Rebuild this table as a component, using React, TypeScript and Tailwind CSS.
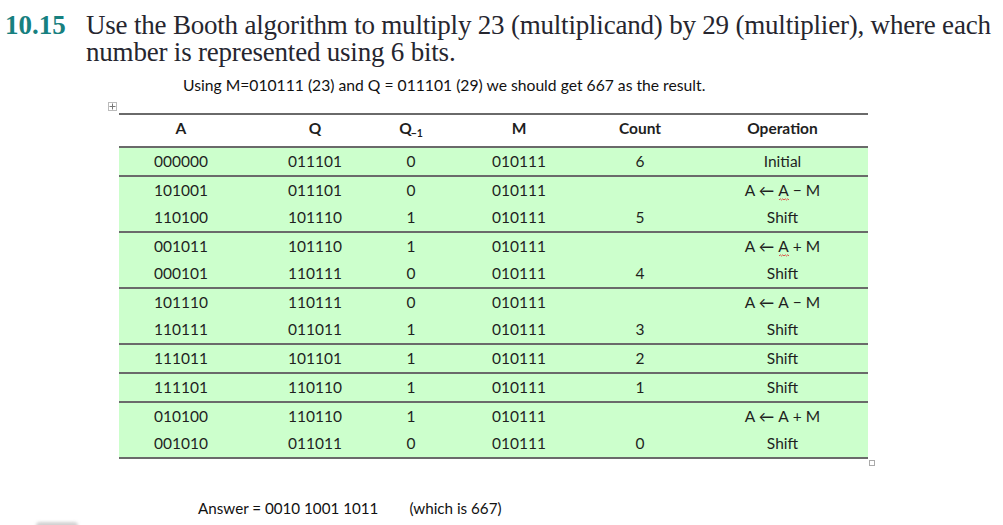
const ROWS_GROUPS: string[][][] = [
  [['000000', '011101', '0', '010111', '6', 'Initial']],
  [
    ['101001', '011101', '0', '010111', '', 'A-M*'],
    ['110100', '101110', '1', '010111', '5', 'Shift'],
  ],
  [
    ['001011', '101110', '1', '010111', '', 'A+M*'],
    ['000101', '110111', '0', '010111', '4', 'Shift'],
  ],
  [
    ['101110', '110111', '0', '010111', '', 'A-M'],
    ['110111', '011011', '1', '010111', '3', 'Shift'],
  ],
  [['111011', '101101', '1', '010111', '2', 'Shift']],
  [['111101', '110110', '1', '010111', '1', 'Shift']],
  [
    ['010100', '110110', '1', '010111', '', 'A+M'],
    ['001010', '011011', '0', '010111', '0', 'Shift'],
  ],
]

const GRID = 'grid grid-cols-[124px_144px_48px_168px_74px_191px]'

// spell-check squiggle under the second "A"
const Squiggle = () => (
  <svg className="absolute left-[1px] top-[19px]" width="10" height="3" viewBox="0 0 10 3" fill="none" stroke="#e0403a" strokeWidth="0.9">
    <path d="M0 2 L1.25 0.8 L2.5 2 L3.75 0.8 L5 2 L6.25 0.8 L7.5 2 L8.75 0.8 L10 2" />
  </svg>
)

const Operation = ({ op }: { op: string }) => {
  if (op === 'Initial' || op === 'Shift') return <span>{op}</span>
  const squiggle = op.endsWith('*')
  const sign = op.includes('+') ? '+' : '−'
  return (
    <span className="whitespace-pre">
      A ← <span className="relative inline-block">A{squiggle && <Squiggle />}</span> {sign} M
    </span>
  )
}

const App = () => {
  return (
    <div className="relative w-[1003px] h-[525px] bg-white overflow-hidden text-[#1f1f1f]">
      {/* Problem heading */}
      <div className="flex pt-[12px] font-['Liberation_Serif',serif] text-[27px] leading-[27px]">
        <p className="w-[86px] pl-[5px] font-bold text-[#17807f] shrink-0">10.15</p>
        <p className="text-[#26262f] tracking-[-0.2px]">
          Use the Booth algorithm to multiply 23 (multiplicand) by 29 (multiplier), where each
          <br />
          number is represented using 6 bits.
        </p>
      </div>

      <p className="mt-[10px] pl-[183px] font-['Lato',sans-serif] text-[15.7px] leading-[18px] text-[#111]">
        Using M=010111 (23) and Q = 011101 (29) we should get 667 as the result.
      </p>

      {/* Table */}
      <div className="relative ml-[119px] mt-[19px] w-[749px] font-['Lato',sans-serif] text-[15.5px] leading-[23px]">
        <span className="absolute left-[-11px] top-[-11px] w-[9px] h-[9px] border border-[#bbb] bg-white flex items-center justify-center">
          <svg width="7" height="7" viewBox="0 0 7 7" fill="none" stroke="#777" strokeWidth="1">
            <path d="M3.5 0.5v6M0.5 3.5h6" />
          </svg>
        </span>
        <div className={`${GRID} h-[35px] pt-[2px] border-t-2 border-b-2 border-[#6a6a6a] font-bold text-center`}>
          <div>A</div>
          <div>Q</div>
          <div>
            Q<sub className="text-[10.5px] -ml-[1px]">−1</sub>
          </div>
          <div>M</div>
          <div>Count</div>
          <div className="pl-[20px]">Operation</div>
        </div>
        <div className="bg-[#ccffcc]">
          {ROWS_GROUPS.map((group, gi) => (
            <div key={gi} className="border-b-2 border-[#6a6a6a]">
              {group.map((row, ri) => (
                <div key={ri} className={`${GRID} h-[27px] items-center text-center`}>
                  <div>{row[0]}</div>
                  <div>{row[1]}</div>
                  <div>{row[2]}</div>
                  <div>{row[3]}</div>
                  <div>{row[4]}</div>
                  <div className="pl-[20px]">
                    <Operation op={row[5]} />
                  </div>
                </div>
              ))}
            </div>
          ))}
        </div>
        <span className="absolute right-[-7px] bottom-[-7px] w-[6px] h-[6px] border border-[#aaa] bg-white" />
      </div>

      <p className="mt-[38px] pl-[198px] font-['Lato',sans-serif] text-[15.2px] leading-[23px] text-[#111] whitespace-pre">
        Answer = 0010 1001 1011        (which is 667)
      </p>

      <div className="absolute left-[36px] top-[522px] w-[42px] h-[8px] rounded-full bg-[#d2d2d2] blur-[1.5px]" />
    </div>
  )
}

export default App
